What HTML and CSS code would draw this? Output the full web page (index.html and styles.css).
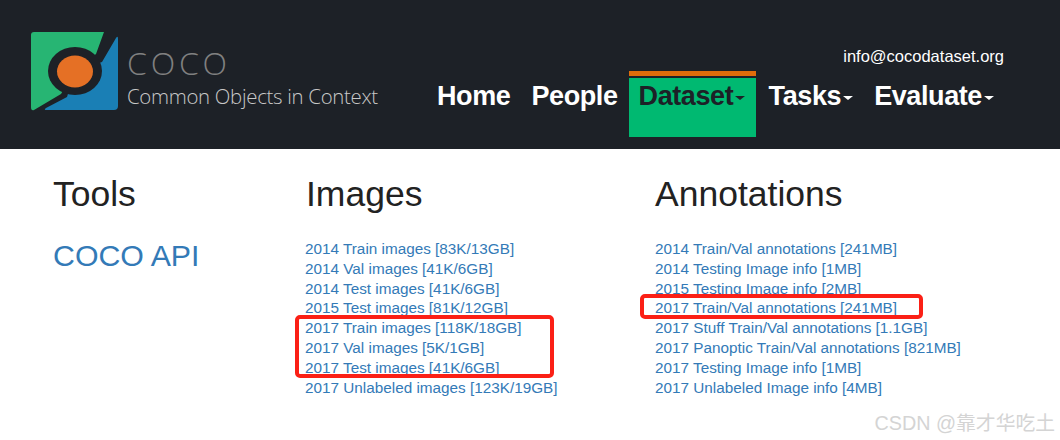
FILE: index.html
```html
<!DOCTYPE html>
<html lang="en">
<head>
    <meta charset="UTF-8">
    <meta name="viewport" content="width=device-width, initial-scale=1.0">
    <title>COCO - Dataset</title>
    <link rel="stylesheet" href="styles.css">
</head>
<body>
    <header class="header">
        <a class="brand" href="#">
            <svg class="brand-logo" viewBox="30 30 90 82" width="90" height="82">
                <path fill="#27b573" d="M34 32H104L96 54L75 71L61 94L34 110Q31 111 31 107V35Q31 32 34 32Z"/>
                <path fill="#1a7fb5" d="M116 38Q118 35 118 39V106Q118 110 114 110H47Q43 110 46 108L67 97L75 71L102 62Z"/>
                <ellipse fill="#1d2127" cx="75" cy="71" rx="27" ry="24"/>
                <ellipse fill="#e57025" cx="75" cy="71.5" rx="18" ry="16"/>
            </svg>
            <div class="brand-text">
                <div class="brand-name">COCO</div>
                <div class="brand-sub">Common Objects in Context</div>
            </div>
        </a>
        <div class="header-right">
            <div class="email">info@cocodataset.org</div>
            <ul class="nav">
                <li class="nav-item"><a href="#">Home</a></li>
                <li class="nav-item"><a href="#">People</a></li>
                <li class="nav-item active"><a href="#">Dataset<span class="caret"></span></a></li>
                <li class="nav-item"><a href="#">Tasks<span class="caret"></span></a></li>
                <li class="nav-item"><a href="#">Evaluate<span class="caret"></span></a></li>
            </ul>
        </div>
    </header>

    <main class="content">
        <section>
            <h2>Tools</h2>
            <a class="api-link" href="#">COCO API</a>
        </section>
        <section>
            <h2>Images</h2>
            <ul class="links links-images">
                <li><a href="#">2014 Train images [83K/13GB]</a></li>
                <li><a href="#">2014 Val images [41K/6GB]</a></li>
                <li><a href="#">2014 Test images [41K/6GB]</a></li>
                <li><a href="#">2015 Test images [81K/12GB]</a></li>
                <li><a href="#">2017 Train images [118K/18GB]</a></li>
                <li><a href="#">2017 Val images [5K/1GB]</a></li>
                <li><a href="#">2017 Test images [41K/6GB]</a></li>
                <li><a href="#">2017 Unlabeled images [123K/19GB]</a></li>
            </ul>
        </section>
        <section>
            <h2>Annotations</h2>
            <ul class="links">
                <li><a href="#">2014 Train/Val annotations [241MB]</a></li>
                <li><a href="#">2014 Testing Image info [1MB]</a></li>
                <li><a href="#">2015 Testing Image info [2MB]</a></li>
                <li><a href="#">2017 Train/Val annotations [241MB]</a></li>
                <li><a href="#">2017 Stuff Train/Val annotations [1.1GB]</a></li>
                <li><a href="#">2017 Panoptic Train/Val annotations [821MB]</a></li>
                <li><a href="#">2017 Testing Image info [1MB]</a></li>
                <li><a href="#">2017 Unlabeled Image info [4MB]</a></li>
            </ul>
        </section>
    </main>

    <div class="mark mark-images"></div>
    <div class="mark mark-annotations"></div>
    <div class="watermark">CSDN @靠才华吃土</div>
</body>
</html>
```

FILE: styles.css
```css
* {
    box-sizing: border-box;
}
body {
    position: relative;
    margin: 0;
    height: 440px;
    overflow: hidden;
    background: #fff;
    font-family: "Liberation Sans", Arial, sans-serif;
    color: #222;
}
a {
    text-decoration: none;
}
ul {
    list-style: none;
    margin: 0;
    padding: 0;
}

.header {
    display: flex;
    height: 149px;
    background: #1d2127;
}
.brand {
    display: flex;
    width: 427px;
    padding: 30px 0 0 30px;
}
.brand-logo {
    flex: none;
}
.brand-text {
    margin: 14px 0 0 7px;
    font-family: "Open Sans", sans-serif;
    font-weight: 300;
    white-space: nowrap;
}
.brand-name {
    font-size: 32px;
    line-height: 38px;
    letter-spacing: 3.8px;
    color: #808080;
}
.brand-sub {
    margin-top: 1px;
    font-size: 20.4px;
    line-height: 26px;
    letter-spacing: -0.3px;
    color: #c8c8c8;
}
.header-right {
    flex: 1;
}
.email {
    padding: 45px 56px 0 0;
    text-align: right;
    font-size: 16.5px;
    line-height: 22px;
    height: 71px;
    color: #fff;
}
.nav {
    display: flex;
}
.nav-item {
    padding-top: 7px;
    margin-right: 2px;
}
.nav-item a {
    display: block;
    height: 59px;
    padding: 0 9px 0 10px;
    font-size: 27px;
    font-weight: bold;
    letter-spacing: -0.4px;
    line-height: 37px;
    color: #fff;
}
.nav-item.active {
    width: 127px;
    margin-right: 3px;
    border-top: 5px solid #df6c0b;
    padding-top: 2px;
}
.nav-item.active a {
    background: #00b971;
    color: #1d2127;
}
.caret {
    display: inline-block;
    margin-left: 2px;
    vertical-align: middle;
    border-top: 4px solid #fff;
    border-left: 5px solid transparent;
    border-right: 5px solid transparent;
}
.active .caret {
    border-top-color: #1d2127;
}

.content {
    display: grid;
    grid-template-columns: 253px 349px 1fr;
    padding: 25px 0 0 53px;
}
h2 {
    margin: 0 0 25px;
    font-size: 35.5px;
    font-weight: normal;
    line-height: 40px;
}
.api-link {
    display: block;
    margin-top: -3px;
    font-size: 30.3px;
    line-height: 40px;
    color: #337ab7;
}
.links {
    font-size: 15.3px;
    line-height: 19.8px;
}
.links a {
    color: #337ab7;
}
.links-images {
    margin-left: -1px;
}

/* hand drawn highlights over the list */
.mark {
    position: absolute;
    border: 4px solid #fb2016;
    border-radius: 5px;
}
.mark-images {
    left: 295px;
    top: 315px;
    width: 259px;
    height: 63px;
}
.mark-annotations {
    left: 640px;
    top: 294px;
    width: 283px;
    height: 25px;
}
.watermark {
    position: absolute;
    right: 5px;
    top: 412px;
    font-family: "Liberation Sans", "Noto Sans CJK SC", sans-serif;
    font-size: 19.8px;
    line-height: 22px;
    color: #d4d4d4;
}
```
